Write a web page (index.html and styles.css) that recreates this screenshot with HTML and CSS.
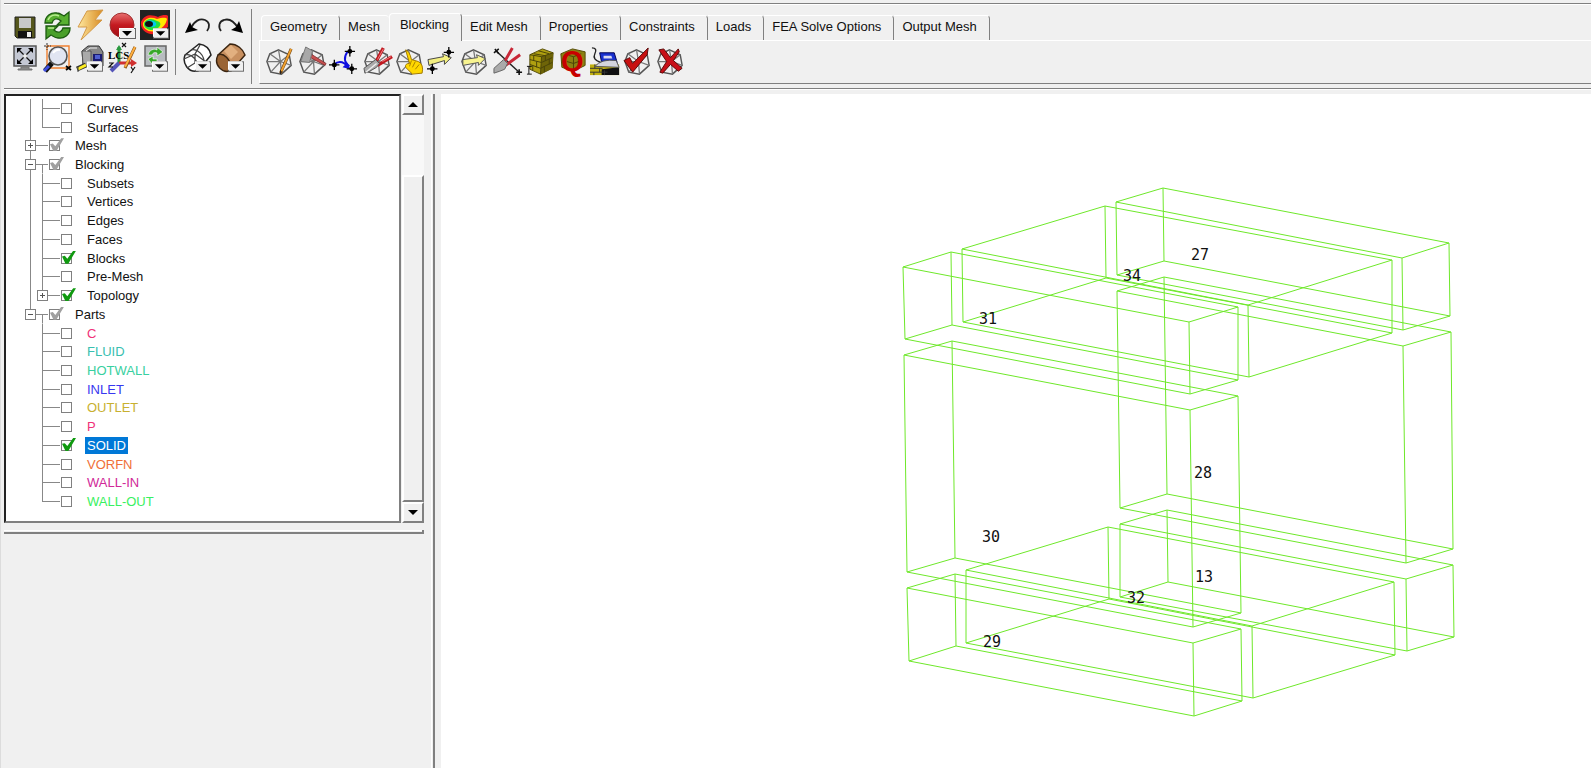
FILE: index.html
```
<!DOCTYPE html>
<html lang="en">
<head>
    <meta charset="UTF-8">
    <meta name="viewport" content="width=device-width, initial-scale=1.0">
    <title>Blocking</title>
    <link rel="stylesheet" href="styles.css">
</head>
<body>
    <!-- shared icon parts -->
    <svg class="defs" aria-hidden="true">
        <defs>
            <symbol id="drop" viewBox="0 0 17 11">
                <path d="M0 0h17v11H0z" fill="#666"/>
                <path d="M0 0h15v9H0z" fill="#fff"/>
                <path d="M1 1h15v9H1z" fill="#f0f0f0"/>
                <path d="M3 3h10L8 8z" fill="#000"/>
            </symbol>
            <symbol id="hex" viewBox="0 0 33 33">
                <path d="M15 4L26 9L28 20L18 29L7 27L3 16L6 8z" fill="#f0f0f0" stroke="#555" stroke-width="1.5"/>
                <path d="M15 4L17 16L6 8M17 16L26 9M17 16L28 20M17 16L18 29M17 16L7 27M17 16L3 16" fill="none" stroke="#777" stroke-width="1.3"/>
            </symbol>
            <symbol id="node" viewBox="0 0 10 10">
                <path d="M5 0v10M0 5h10" stroke="#000" stroke-width="1.2"/>
                <circle cx="5" cy="5" r="2.3"/>
            </symbol>
        </defs>
    </svg>

    <header class="toolbar">
        <div class="tools tools-main">
            <button title="Save"><svg viewBox="0 0 33 33"><path d="M7 8h20v21H9l-2-2z" fill="#55561c" stroke="#222"/><path d="M11 9h12v10H11z" fill="#c8c8c8"/><path d="M10 22h14v7H10z" fill="#111"/><path d="M19 23h4v5h-4z" fill="#eee"/></svg></button>
            <button title="Refresh"><svg viewBox="0 0 33 33"><path d="M4 14C4 7 10 3 16 4c3 0 5 2 7 3l5-4v13H16l4-4c-4-4-8-2-9 2z" fill="#58b030" stroke="#1c5a10" stroke-width="1.3"/><path d="M29 19c0 7-6 11-12 10-3 0-5-2-7-3l-5 4V17h12l-4 4c4 4 8 2 9-2z" fill="#4aa02a" stroke="#1c5a10" stroke-width="1.3"/><path d="M7 11c2-5 7-6 11-4M7 19h6" fill="none" stroke="#b8ec90" stroke-width="1.5"/></svg></button>
            <button title="Compute"><svg viewBox="0 0 33 33"><defs><linearGradient id="bolt" x1="0" x2="1"><stop offset="0" stop-color="#ffe9a0"/><stop offset="1" stop-color="#d88a20"/></linearGradient></defs><path d="M13 2L29 1L21 11H28L7 31L13 18H4z" fill="url(#bolt)" stroke="#d39a4a"/></svg></button>
            <button title="Stop"><svg viewBox="0 0 33 33"><defs><linearGradient id="ball" x2="0" y2="1"><stop offset="0" stop-color="#e87070"/><stop offset=".5" stop-color="#c41a20"/><stop offset="1" stop-color="#a01018"/></linearGradient></defs><circle cx="15" cy="16" r="12" fill="url(#ball)" stroke="#a03030"/><use href="#drop" x="12" y="19" width="17" height="11"/></svg></button>
            <button title="Contours"><svg viewBox="0 0 33 33"><path d="M0 1h30v30H0z" fill="#222"/><path d="M1 13C5 4 13 6 18 8c5-3 10-2 10-1v11c-5 2-6 7-13 7C7 26 0 21 1 13z" fill="#f02020"/><path d="M3 14c3-6 9-6 14-4 4-1 9-2 10 0-1 6-5 9-10 12-8 2-15-2-14-8z" fill="#ffe800"/><path d="M4 14c3-5 8-5 13-2 4 1 5 4 0 8-7 3-14-1-13-6z" fill="#20e040"/><path d="M5 14c3-4 8-3 11 0 1 3-2 4-5 4-4 0-7-1-6-4z" fill="#00c8f0"/><ellipse cx="9" cy="15" rx="4" ry="3" fill="#111"/><use href="#drop" x="13" y="19" width="16" height="11"/></svg></button>

            <button title="Fit window"><svg viewBox="0 0 33 33"><path d="M6 4h22v20H6z" fill="#c4c8d4" stroke="#555" stroke-width="1.5"/><path d="M13 25h8v2h3v1H10v-1h3z" fill="#888" stroke="#777"/><path d="M11 8l12 12M23 8L11 20" stroke="#111" stroke-width="1.3"/><path d="M9 6h5l-5 5zM25 6h-5l5 5zM9 22h5l-5-5zM25 22h-5l5-5z"/><circle cx="17" cy="14" r="2" fill="#eee"/></svg></button>
            <button title="Box zoom"><svg viewBox="0 0 33 33"><path d="M6 4h22v22H6z" fill="none" stroke="#f08030" stroke-width="1.4"/><path d="M6 1v7M3 4h7" stroke="#333" stroke-dasharray="2 1"/><path d="M11 21l-7 8" stroke="#111" stroke-width="5"/><path d="M8 24l-5 5" stroke="#4050e0" stroke-width="3"/><circle cx="17" cy="14" r="9" fill="#dfe3f2" fill-opacity=".9" stroke="#555" stroke-width="1.6"/><path d="M12 11q3-4 7-3" fill="none" stroke="#fff" stroke-width="2"/><path d="M25 24l5 4M30 24l-5 4" stroke="#000" stroke-width="1.8"/></svg></button>
            <button title="Measure"><svg viewBox="0 0 33 33"><path d="M8 9l6-5h11l4 6v14l-15 1-5-3z" fill="#888" stroke="#333"/><path d="M8 9h9v14l-3 2-5-3z" fill="#aaa" stroke="#555"/><path d="M19 12h9v8h-9z" fill="#1c1c70"/><path d="M21 13h5v4h-5z" fill="#5060d0"/><path d="M12 9l4-3h7" fill="none" stroke="#eee"/><path d="M12 23l-9 4" stroke="#333" stroke-width="5"/><path d="M12 23l-8 4" stroke="#ffee20" stroke-width="3"/><path d="M4 25v5" stroke="#444"/><use href="#drop" x="13" y="19" width="16" height="11"/></svg></button>
            <button title="Local coordinate system"><svg viewBox="0 0 33 33"><path d="M12 21V5" stroke="#2a9a40" stroke-width="3"/><path d="M9 8l3-5 3 5z" fill="#2a9a40"/><path d="M12 21h14" stroke="#d03030" stroke-width="3"/><path d="M24 17l6 4-6 4z" fill="#d03030"/><path d="M12 21l-8 8" stroke="#5555b8" stroke-width="4"/><text x="1" y="17" class="lcs">LCS</text><path d="M28 5L18 26" stroke="#8a5010" stroke-width="3"/><path d="M28 5L18 25" stroke="#ffb040" stroke-width="2"/><path d="M15 1l4 4M19 1l-4 4M2 21h4l-4 4h4M24 25l2 3M28 25l-4 6" fill="none" stroke="#111" stroke-width="1.2"/></svg></button>
            <button title="Refresh view"><svg viewBox="0 0 33 33"><path d="M5 4h21v20H5z" fill="#b8bcc0" stroke="#666" stroke-width="1.5"/><path d="M12 25h8v3h-8z" fill="#999"/><path d="M8 13c1-5 6-7 9-5V5l6 5-6 4v-3c-3-1-4 0-5 2zM8 17l5-3v3h4v4h-4v2z" fill="#38a828" stroke="#fff" stroke-width=".6"/><use href="#drop" x="12" y="19" width="16" height="11"/></svg></button>
        </div>
        <div class="tools tools-edit">
            <button title="Undo"><svg viewBox="0 0 33 33"><path d="M9 19C12 12 18 9 23 11c5 2 5 7 2 11" fill="none" stroke="#222" stroke-width="1.8"/><path d="M3 24L8 13l2 5 6 3z"/></svg></button>
            <button title="Redo"><svg viewBox="0 0 33 33"><path d="M6 22C3 18 4 12 9 11c6-2 11 3 14 8" fill="none" stroke="#222" stroke-width="1.8"/><path d="M28 24l-12-3 5-3 3-6z"/></svg></button>
            <button title="Wireframe"><svg viewBox="0 0 33 33"><path d="M3 13L17 2C25 3 28 8 29 13L16 29C6 31 0 21 3 13z" fill="#fff" stroke="#222" stroke-width="1.5"/><path d="M3 13c6-2 14 5 13 16M9 8c6-2 14 5 13 14M2 17l11-5 5-9M13 12l11 8M5 26l8-5V12" fill="none" stroke="#444" stroke-width="1.3"/><use href="#drop" x="13" y="19" width="16" height="11"/></svg></button>
            <button title="Solid"><svg viewBox="0 0 33 33"><path d="M3 13L15 2C22 2 28 7 30 13L16 29z" fill="#c89060" stroke="#3a2410" stroke-width="1.4"/><path d="M9 9l7-6 7 7-7 7z" fill="#e2b080"/><path d="M3 13c5-3 13 4 14 15C8 33-2 23 3 13z" fill="#9a6434" stroke="#3a2410" stroke-width="1.4"/><use href="#drop" x="13" y="19" width="16" height="11"/></svg></button>
        </div>

        <div class="notebook">
            <nav class="tabs" role="tablist">
                <button role="tab">Geometry</button>
                <button role="tab">Mesh</button>
                <button role="tab" class="active" aria-selected="true">Blocking</button>
                <button role="tab">Edit Mesh</button>
                <button role="tab">Properties</button>
                <button role="tab">Constraints</button>
                <button role="tab">Loads</button>
                <button role="tab">FEA Solve Options</button>
                <button role="tab">Output Mesh</button>
            </nav>
            <div class="tab-page" role="tabpanel">
                <div class="tools tools-blocking">
                    <button title="Create block"><svg viewBox="0 0 33 33"><use href="#hex"/><path d="M28 3L17 28" stroke="#6a4010" stroke-width="3"/><path d="M28 3L18 26" stroke="#f0a030" stroke-width="2"/><path d="M17 29v-4" stroke="#222"/></svg></button>
                    <button title="Split block"><svg viewBox="0 0 33 33"><use href="#hex"/><path d="M14 8l16 10-1 2-17-9z" fill="#c85050" stroke="#7a2a2a" stroke-width=".8"/><path d="M9 1l7 4-3 12-9-1z" fill="#a8a8a8" stroke="#777"/></svg></button>
                    <button title="Merge vertices"><svg viewBox="0 0 33 33"><path d="M5 19q8-6 15 3M19 6q-6 9 2 15" fill="none" stroke="#1010e0" stroke-width="2"/><path d="M22 24l-8-2 5-5z" fill="#1010e0"/><use href="#node" x="16" y="0" width="11" height="11"/><use href="#node" x="0" y="14" width="11" height="11"/><use href="#node" x="18" y="18" width="11" height="11"/></svg></button>
                    <button title="Edit block"><svg viewBox="0 0 33 33"><use href="#hex"/><path d="M14 17L22 2M16 20L31 11" stroke="#c01820" stroke-width="3.4"/><path d="M22 3l-6 11M30 11l-9 5" stroke="#f08080"/><path d="M14 14l4 4-3 4-7 4-5 2-1-5z" fill="#aaa" stroke="#555"/><path d="M4 27l11-9" stroke="#eee" stroke-width="1.4"/></svg></button>
                    <button title="Associate"><svg viewBox="0 0 33 33"><use href="#hex"/><path d="M12 4q4 1 6 10l7 2q6 3 4 12l-10 1-7-7q-1-4 4-4z" fill="#ffd800" stroke="#a07800"/><path d="M18 15l-2 6M22 16l-3 6M26 19l-4 5" stroke="#a88000"/></svg></button>
                    <button title="Move vertex"><svg viewBox="0 0 33 33"><path d="M1 14l16-3-1-3 9 4-7 7v-4L2 20z" fill="#f4f080" stroke="#444"/><use href="#node" x="17" y="1" width="11" height="11"/><use href="#node" x="0" y="18" width="11" height="11"/></svg></button>
                    <button title="Transform blocks"><svg viewBox="0 0 33 33"><use href="#hex"/><path d="M4 14l15-2-1-3 9 4-7 7v-3L4 20z" fill="#f8f490" stroke="#555"/></svg></button>
                    <button title="Edit edge"><svg viewBox="0 0 33 33"><path d="M4 5l24 22" stroke="#222" stroke-width="1.4"/><path d="M2 7l5-4M3 3l4 5M25 27h6M28 24v6" stroke="#111" stroke-width="1.6"/><path d="M13 16L21 2M14 20L29 9" stroke="#c82838" stroke-width="3"/><path d="M12 14l4 4-3 6-5 2-6 2v-5z" fill="#aaa" stroke="#666"/></svg></button>
                    <button title="Pre-mesh params"><svg viewBox="0 0 33 33"><path d="M5 9l13-6 11 4-1 16-12 6-11-5z" fill="#b0a010" stroke="#554c08"/><path d="M17 11l12-4-1 16-12 6z" fill="#6e6408"/><path d="M5 9l12 2 12-4M17 11l-1 18M5 14l12 3 11-5M5 19l11 4 12-6M9 10v5M12 16v6M8 20v5M21 10v5M25 13v6M20 21v6M9 8l12 2M14 5l11 3" fill="none" stroke="#4a4408"/><path d="M2 21h5M2 29h5M4 21v8" stroke="#111"/></svg></button>
                    <button title="Pre-mesh quality"><svg viewBox="0 0 33 33"><path d="M4 8l12-5 13 3v14l-12 6-12-4z" fill="#8a8010" stroke="#554c08"/><path d="M9 9l8 2 8-3M17 11v14M10 16l7 2 8-3" fill="none" stroke="#4a4408"/><text x="4" y="26" class="quality">Q</text></svg></button>
                    <button title="Pre-mesh smooth"><svg viewBox="0 0 33 33"><path d="M0 19h30v11H0z" fill="#c0b010"/><path d="M12 24l18-2v8H12z" fill="#111"/><path d="M0 23h13M0 27h18M5 19v4M10 23v4M4 27v3M15 25v5" stroke="#333"/><path d="M2 2q6 0 3 6t6 9" fill="none" stroke="#222" stroke-width="1.4"/><path d="M10 7h15l3 10H12z" fill="#1830d0" stroke="#000050"/><path d="M14 10h8l1 3h-9z" fill="#d8d8f0"/><path d="M5 21q7-8 22-6l3 7z" fill="#d4d4dc" stroke="#555"/></svg></button>
                    <button title="Check blocks"><svg viewBox="0 0 33 33"><use href="#hex"/><path d="M2 15l6-3 3 6L27 2l-1 7-15 18z" fill="#c81010" stroke="#5a0808"/></svg></button>
                    <button title="Delete block"><svg viewBox="0 0 33 33"><use href="#hex"/><path d="M4 4l5-1 7 9 8-9 1 3-6 9 9 8-4 3-8-7-8 9-3-1 7-11z" fill="#c81018" stroke="#5a0808"/></svg></button>
                </div>
            </div>
        </div>
    </header>

    <main class="workspace">
        <aside class="side">
            <div class="tree-frame">
                <ul class="tree">
                    <li><i class="v"></i><i class="v r"></i><i class="h"></i><input type="checkbox" id="curves"><label for="curves">Curves</label></li>
                    <li><i class="v"></i><i class="up r"></i><i class="h"></i><input type="checkbox" id="surfaces"><label for="surfaces">Surfaces</label></li>
                    <li><i class="v"><button class="plus" aria-label="Expand Mesh"></button></i><i class="h"></i><input type="checkbox" class="partial" id="mesh" checked><label for="mesh">Mesh</label></li>
                    <li><i class="v"><button aria-label="Collapse Blocking"></button></i><i class="h down"></i><input type="checkbox" class="partial" id="blocking" checked><label for="blocking">Blocking</label></li>
                    <li><i class="v"></i><i class="v r"></i><i class="h"></i><input type="checkbox" id="subsets"><label for="subsets">Subsets</label></li>
                    <li><i class="v"></i><i class="v r"></i><i class="h"></i><input type="checkbox" id="vertices"><label for="vertices">Vertices</label></li>
                    <li><i class="v"></i><i class="v r"></i><i class="h"></i><input type="checkbox" id="edges"><label for="edges">Edges</label></li>
                    <li><i class="v"></i><i class="v r"></i><i class="h"></i><input type="checkbox" id="faces"><label for="faces">Faces</label></li>
                    <li><i class="v"></i><i class="v r"></i><i class="h"></i><input type="checkbox" id="blocks" checked><label for="blocks">Blocks</label></li>
                    <li><i class="v"></i><i class="v r"></i><i class="h"></i><input type="checkbox" id="premesh"><label for="premesh">Pre-Mesh</label></li>
                    <li><i class="v"></i><i class="up"><button class="plus" aria-label="Expand Topology"></button></i><i class="h"></i><input type="checkbox" id="topology" checked><label for="topology">Topology</label></li>
                    <li><i class="up"><button aria-label="Collapse Parts"></button></i><i class="h down"></i><input type="checkbox" class="partial" id="parts" checked><label for="parts">Parts</label></li>
                    <li><i></i><i class="v r"></i><i class="h"></i><input type="checkbox" id="c"><label for="c" class="pink">C</label></li>
                    <li><i></i><i class="v r"></i><i class="h"></i><input type="checkbox" id="fluid"><label for="fluid" class="teal">FLUID</label></li>
                    <li><i></i><i class="v r"></i><i class="h"></i><input type="checkbox" id="hotwall"><label for="hotwall" class="mint">HOTWALL</label></li>
                    <li><i></i><i class="v r"></i><i class="h"></i><input type="checkbox" id="inlet"><label for="inlet" class="blue">INLET</label></li>
                    <li><i></i><i class="v r"></i><i class="h"></i><input type="checkbox" id="outlet"><label for="outlet" class="gold">OUTLET</label></li>
                    <li><i></i><i class="v r"></i><i class="h"></i><input type="checkbox" id="p"><label for="p" class="pink">P</label></li>
                    <li><i></i><i class="v r"></i><i class="h"></i><input type="checkbox" id="solid" checked><label for="solid" class="selected">SOLID</label></li>
                    <li><i></i><i class="v r"></i><i class="h"></i><input type="checkbox" id="vorfn"><label for="vorfn" class="orange">VORFN</label></li>
                    <li><i></i><i class="v r"></i><i class="h"></i><input type="checkbox" id="wallin"><label for="wallin" class="magenta">WALL-IN</label></li>
                    <li><i></i><i class="up r"></i><i class="h"></i><input type="checkbox" id="wallout"><label for="wallout" class="green">WALL-OUT</label></li>
                </ul>
                <div class="scrollbar">
                    <button aria-label="Scroll up"><svg viewBox="0 0 10 5"><path d="M0 5h10L5 0z"/></svg></button>
                    <div class="trough"><div class="thumb"></div></div>
                    <button aria-label="Scroll down"><svg viewBox="0 0 10 5"><path d="M0 0h10L5 5z"/></svg></button>
                </div>
            </div>
            <div class="sash-h"></div>
        </aside>
        <div class="sash-v"></div>
        <section class="viewport">
            <svg viewBox="441 94 1150 674" preserveAspectRatio="xMidYMid meet" role="img" aria-label="Blocking wireframe">
                <g class="wire">
                    <!-- upper layer: 27, 34, 31 -->
                    <path d="M1116 202L1163 188L1449 243L1402 258zM1117 275L1164 261L1450 316L1403 330zM1116 202L1117 275M1163 188L1164 261M1449 243L1450 316M1402 258L1403 330"/>
                    <path d="M962 249L1105 206L1392 260L1248 305zM963 322L1106 278L1392 333L1249 377zM962 249L963 322M1105 206L1106 278M1392 260V333M1248 305L1249 377"/>
                    <path d="M903 267L951 252L1238 307L1189 322zM905 339L952 325L1238 380L1190 394zM903 267L905 339M951 252L952 325M1238 307V380M1189 322L1190 394"/>
                    <!-- middle layer: 28, 30 -->
                    <path d="M1117 291L1164 277L1451 332L1403 346zM1120 508L1167 494L1453 549L1406 563zM1117 291L1120 508M1164 277L1167 494M1451 332L1453 549M1403 346L1406 563"/>
                    <path d="M904 355L952 341L1238 396L1190 410zM907 572L955 558L1241 613L1193 627zM904 355L907 572M952 341L955 558M1238 396L1241 613M1190 410L1193 627"/>
                    <!-- lower layer: 13, 32, 29 -->
                    <path d="M1120 524L1167 510L1453 565L1406 579zM1120 597L1168 582L1454 637L1407 651zM1120 524V597M1167 510L1168 582M1453 565L1454 637M1406 579L1407 651"/>
                    <path d="M966 570L1108 527L1394 582L1252 626zM966 643L1109 599L1395 655L1253 698zM966 570V643M1108 527L1109 599M1394 582L1395 655M1252 626L1253 698"/>
                    <path d="M907 588L955 574L1241 629L1193 643zM909 661L956 646L1242 701L1194 716zM907 588L909 661M955 574L956 646M1241 629L1242 701M1193 643L1194 716"/>
                </g>
                <g class="block-ids">
                    <text x="1191" y="260">27</text>
                    <text x="1123" y="281">34</text>
                    <text x="979" y="324">31</text>
                    <text x="1194" y="478">28</text>
                    <text x="982" y="542">30</text>
                    <text x="1195" y="582">13</text>
                    <text x="1127" y="603">32</text>
                    <text x="983" y="647">29</text>
                </g>
            </svg>
        </section>
    </main>
</body>
</html>
```
FILE: styles.css
```
* {
    box-sizing: border-box;
}
body {
    margin: 0;
    height: 100vh;
    display: flex;
    flex-direction: column;
    overflow: hidden;
    background: #f0f0f0;
    border-left: 1px solid #dcdcdc;
    font-family: "Liberation Sans", Arial, sans-serif;
    font-size: 13px;
    color: #111;
}
button {
    margin: 0;
    padding: 0;
    border: 0;
    background: none;
    font: inherit;
    color: inherit;
}
.defs {
    position: absolute;
    width: 0;
    height: 0;
}

/* toolbar */
.toolbar {
    display: flex;
    margin: 3px 0 5px 3px;
    border-top: 1px solid #808080;
    border-bottom: 1px solid #808080;
    box-shadow: inset 0 1px #fff, 0 1px #fff;
    padding: 5px 0 4px 4px;
}
.tools {
    display: grid;
}
.tools svg {
    display: block;
    width: 33px;
    height: 33px;
}
.tools-main {
    grid-template-columns: repeat(5, 33px);
    align-content: start;
    padding-right: 2px;
    border-right: 1px solid #808080;
    margin-bottom: 9px;
}
.tools-edit {
    grid-template-columns: repeat(2, 33px);
    align-content: start;
    padding: 0 3px 0 6px;
    border-right: 1px solid #808080;
}
.lcs {
    font: bold 11px "Liberation Serif", serif;
}
.quality {
    font: bold 30px "Liberation Sans", sans-serif;
    fill: #c80000;
}

/* tab notebook */
.notebook {
    flex: 1;
    display: flex;
    flex-direction: column;
    margin-left: 7px;
    padding-top: 4px;
}
.tabs {
    display: flex;
    align-items: flex-end;
    padding-left: 2px;
}
.tabs button {
    height: 25px;
    padding: 0 12px 3px 8px;
    border-top: 1px solid #fff;
    border-right: 1px solid #808080;
    border-top-right-radius: 4px;
    white-space: nowrap;
}
.tabs button:first-child {
    border-left: 1px solid #fff;
    border-top-left-radius: 4px;
}
.tabs .active {
    height: 28px;
    margin-bottom: -1px;
    padding: 0 12px 6px 10px;
    border-left: 1px solid #fff;
    border-top-left-radius: 4px;
    background: #f0f0f0;
    z-index: 1;
}
.tabs button:nth-child(2) {
    padding-right: 9px;
    border-right: 0;
}
.tab-page {
    flex: 1;
    padding: 5px 4px 3px;
    border-top: 1px solid #fff;
    border-left: 1px solid #fff;
    border-bottom: 1px solid #808080;
}
.tools-blocking {
    width: 423px;
    grid-template-columns: repeat(13, 1fr);
}
.tools-blocking svg {
    width: 32px;
    height: 32px;
    margin: 0 auto;
}

/* model tree */
.workspace {
    flex: 1;
    display: flex;
    min-height: 0;
}
.side {
    width: 420px;
    margin-left: 3px;
}
.tree-frame {
    display: flex;
    gap: 1px;
}
.tree {
    flex: 1;
    display: grid;
    grid-auto-rows: 1fr;
    min-height: 429px;
    margin: 0;
    padding: 3px 0 10px 18px;
    list-style: none;
    background: #fff;
    border: 2px solid;
    border-color: #222 #808080 #808080 #222;
}
.tree li {
    display: flex;
    align-items: center;
}
.tree i {
    align-self: stretch;
    width: 12px;
    display: flex;
    align-items: center;
    background-repeat: no-repeat;
    --line: linear-gradient(#888, #888);
}
.tree .v {
    background-image: var(--line);
    background-size: 1px 100%;
    background-position: 6px 0;
}
.tree .up {
    background-image: var(--line);
    background-size: 1px 50%;
    background-position: 6px 0;
}
.tree .h {
    background-image: var(--line);
    background-size: 100% 1px;
    background-position: 0 50%;
}
.tree .r {
    background-image: var(--line), var(--line);
    background-size: 1px 100%, 6px 1px;
    background-position: 6px 0, 6px 50%;
}
.tree .up.r {
    background-size: 1px 50%, 6px 1px;
}
.tree .h.down {
    background-image: var(--line), var(--line);
    background-size: 100% 1px, 1px 50%;
    background-position: 0 50%, 6px 100%;
}
.tree i button {
    flex: none;
    width: 11px;
    height: 11px;
    margin-left: 1px;
    border: 1px solid #808080;
    background: linear-gradient(#555, #555) center / 5px 1px no-repeat #fff;
}
.tree i .plus {
    background: linear-gradient(#555, #555) center / 5px 1px no-repeat,
        linear-gradient(#555, #555) center / 1px 5px no-repeat #fff;
}
.tree input {
    appearance: none;
    position: relative;
    width: 11px;
    height: 11px;
    margin: 0 13px 0 1px;
    border: 1px solid #808080;
    background: #fff;
}
.tree input:checked::after {
    content: "";
    position: absolute;
    left: 0;
    top: -3px;
    width: 14px;
    height: 13px;
    background: #109a10;
    clip-path: polygon(0 45%, 20% 40%, 38% 62%, 80% 0, 100% 0, 45% 100%, 25% 100%);
}
.tree .partial:checked::after {
    background: #a0a0a0;
}
.tree label {
    padding: 0 2px;
    line-height: 17px;
}
.pink { color: #f03078; }
.teal { color: #38c0b0; }
.mint { color: #38d0a0; }
.blue { color: #3838f0; }
.gold { color: #c8b030; }
.orange { color: #f07038; }
.magenta { color: #d02898; }
.green { color: #38f060; }
.selected {
    color: #fff;
    background: #0078d7;
}

.scrollbar {
    width: 22px;
    display: flex;
    flex-direction: column;
}
.scrollbar button,
.thumb {
    border: 2px solid;
    border-color: #fff #808080 #808080 #fff;
    background: #f0f0f0;
}
.scrollbar button {
    height: 21px;
    display: flex;
    align-items: center;
    justify-content: center;
}
.scrollbar svg {
    width: 10px;
    height: 5px;
}
.trough {
    flex: 1;
    padding-top: 60px;
    background: #f8f8f8;
}
.thumb {
    height: 100%;
}
.sash-h {
    height: 4px;
    margin-top: 7px;
    border: solid #808080;
    border-width: 0 2px 2px 0;
    box-shadow: inset 0 1px #fff;
}
.sash-v {
    width: 4px;
    margin: 0 6px 0 7px;
    border-left: 1px solid #fff;
    border-right: 2px solid #808080;
}

/* 3D view */
.viewport {
    flex: 1;
    background: #fff;
}
.viewport svg {
    display: block;
    width: 100%;
    height: 100%;
}
.wire {
    fill: none;
    stroke: #6ee82a;
    stroke-width: 1px;
}
.block-ids {
    font: 15px "DejaVu Sans Mono", monospace;
    fill: #111;
}
```
